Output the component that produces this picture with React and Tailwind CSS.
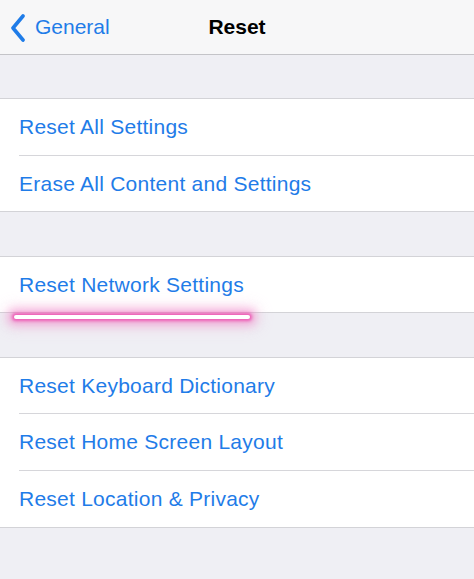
import React from "react";

const Row = ({ children, h }) => (
  <div className="flex items-center pl-[19px]" style={{ height: h }}>
    <span className="text-[21px] text-[#1f7ce8] tracking-[0.25px]">{children}</span>
  </div>
);

const Sep = () => (
  <div className="pl-[19px] bg-white">
    <div className="h-px bg-[#d6d6da]" />
  </div>
);

const Group = ({ items }) => (
  <div className="bg-white border-y border-[#d3d3d7]">
    {items.map(([t, h], i) => (
      <React.Fragment key={t}>
        {i > 0 && <Sep />}
        <Row h={h}>{t}</Row>
      </React.Fragment>
    ))}
  </div>
);

export default function App() {
  return (
    <div
      className="w-[474px] h-[579px] bg-[#efeff4] overflow-hidden relative"
      style={{ fontFamily: '"Liberation Sans", Arial, sans-serif' }}
    >
      <div className="h-[55px] bg-[#f7f7f8] border-b border-[#c4c4c8] flex items-center relative">
        <div className="flex items-center pl-[10px] text-[#1f7ce8]">
          <svg width="16" height="28" viewBox="0 0 16 28" className="mt-[1px]">
            <path d="M13 2 L3 14 L13 26" fill="none" stroke="#1f7ce8" strokeWidth="3.6" strokeLinecap="round" strokeLinejoin="round" />
          </svg>
          <span className="text-[21px] ml-[9px]">General</span>
        </div>
        <div className="absolute left-0 right-0 text-center text-[21px] font-bold text-black pointer-events-none">
          Reset
        </div>
      </div>
      <div className="h-[43px]" />
      <Group items={[["Reset All Settings", 56], ["Erase All Content and Settings", 55]]} />
      <div className="h-[44px]" />
      <Group items={[["Reset Network Settings", 55]]} />
      <div className="h-[44px]" />
      <Group items={[["Reset Keyboard Dictionary", 55], ["Reset Home Screen Layout", 56], ["Reset Location & Privacy", 56]]} />
      <div
        className="absolute left-[14px] top-[315px] w-[236px] h-[4px] rounded-full bg-white"
        style={{ boxShadow: "0 0 3px 2px rgba(236,80,175,0.85), 0 0 9px 6px rgba(240,120,195,0.5), 0 0 16px 8px rgba(245,170,215,0.3)" }}
      />
    </div>
  );
}
